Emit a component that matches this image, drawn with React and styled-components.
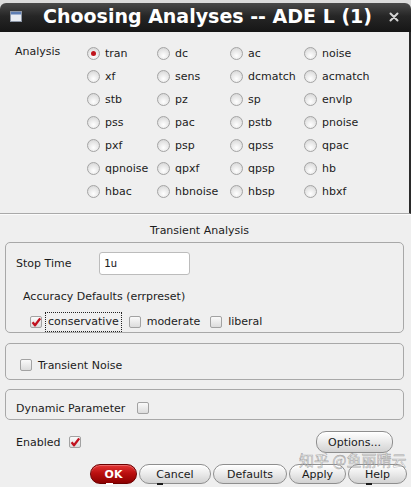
import React from 'react';
import styled, { createGlobalStyle, css } from 'styled-components';

const GlobalStyle = createGlobalStyle`
    body {
        margin: 0;
        background: #dcdcdc;
        font-family: "DejaVu Sans", "Noto Sans", sans-serif;
        font-size: 11px;
        color: #1c1c1c;
    }
`;

const analyses = [
    'tran', 'dc', 'ac', 'noise',
    'xf', 'sens', 'dcmatch', 'acmatch',
    'stb', 'pz', 'sp', 'envlp',
    'pss', 'pac', 'pstb', 'pnoise',
    'pxf', 'psp', 'qpss', 'qpac',
    'qpnoise', 'qpxf', 'qpsp', 'hb',
    'hbac', 'hbnoise', 'hbsp', 'hbxf',
];

const Window = styled.div`
    position: relative;
    width: 411px;
    height: 487px;
    display: flex;
    flex-direction: column;
    overflow: hidden;
`;

const TitleBar = styled.div`
    margin-top: 3px;
    height: 29px;
    display: flex;
    align-items: center;
    padding: 0 12px 2px 10px;
    box-sizing: border-box;
    background: linear-gradient(#4a4a4a, #262626 45%, #161616);
    border-radius: 6px 6px 0 0;
    color: #fff;
`;

const Title = styled.div`
    flex: 1;
    padding-left: 21px;
    font-size: 19px;
    font-weight: bold;
    line-height: 1;
    white-space: nowrap;
`;

const Body = styled.div`
    flex: 1;
    background: #efefef;
    display: flex;
    flex-direction: column;
`;

const AnalysisPanel = styled.div`
    display: flex;
    padding: 10px 0 10px 15px;
    border-right: 2px solid #2a2a2a;
    border-bottom: 1px solid #a9a9a9;
`;

const PanelLabel = styled.div`
    width: 72px;
    line-height: 19px;
`;

const RadioGrid = styled.div`
    display: grid;
    grid-template-columns: 70px 73px 74px 1fr;
    grid-auto-rows: 23px;
`;

const RadioItem = styled.label`
    display: flex;
    align-items: center;
    gap: 5px;
    white-space: nowrap;
`;

const RadioDot = styled.span`
    position: relative;
    width: 13px;
    height: 13px;
    box-sizing: border-box;
    border: 1px solid #a4a4a4;
    border-radius: 50%;
    background: radial-gradient(circle at 50% 70%, #ffffff, #e4e4e4 60%, #cfcfcf);
    flex-shrink: 0;

    ${p => p.checked && css`
        &::after {
            content: '';
            position: absolute;
            left: 3px;
            top: 3px;
            width: 5px;
            height: 5px;
            border-radius: 50%;
            background: #c0141c;
        }
    `}
`;

const LowerPanel = styled.div`
    display: flex;
    flex-direction: column;
    padding: 0 7px 0 5px;
    border-top: 1px solid #fbfbfb;
`;

const SectionTitle = styled.div`
    text-align: center;
    line-height: 18px;
    padding: 7px 10px 0 0;
    margin-bottom: 2px;
`;

const Group = styled.div`
    border: 1px solid #a8a8a8;
    border-radius: 5px;
    margin-top: ${p => p.gap || 0}px;
    padding: ${p => p.pad};
`;

const Row = styled.div`
    display: flex;
    align-items: center;
    height: ${p => p.h || 16}px;
    margin-top: ${p => p.mt || 0}px;
    margin-left: ${p => p.ml || 0}px;
    gap: ${p => p.gap || 0}px;
`;

const FieldLabel = styled.span`
    width: 83px;
`;

const TextInput = styled.input`
    width: 91px;
    height: 23px;
    box-sizing: border-box;
    padding: 0 4px;
    border: 1px solid #bcbcbc;
    border-radius: 3px;
    background: #fff;
    font-family: "DejaVu Sans Mono", "Liberation Mono", monospace;
    font-size: 11px;
    color: #222;
    outline: none;
`;

const Hint = styled.div`
    margin: 14px 0 0 7px;
    line-height: 16px;
`;

const CheckItem = styled.label`
    display: flex;
    align-items: center;
    white-space: nowrap;
`;

const Box = styled.span`
    width: 12px;
    height: 12px;
    box-sizing: border-box;
    border: 1px solid #a2a2a2;
    border-radius: 2px;
    background: linear-gradient(#fafafa, #dcdcdc);
    display: inline-flex;
    flex-shrink: 0;
    margin-left: ${p => p.ml || 0}px;

    svg {
        display: block;
    }
`;

const CheckText = styled.span`
    margin-left: 3px;
    padding: 0 2px;
    line-height: 18px;
    border: 1px dotted ${p => (p.focused ? '#222' : 'transparent')};
`;

const Button = styled.button`
    width: ${p => p.w}px;
    height: ${p => p.h || 20}px;
    padding: 0;
    border: 1px solid #8e8e8e;
    border-radius: 10px;
    background: linear-gradient(#ffffff, #ececec 45%, #d2d2d2);
    box-shadow: inset 0 1px 0 #fff;
    font-family: "DejaVu Sans", sans-serif;
    font-size: 11px;
    color: #1a1a1a;
    flex-shrink: 0;

    ${p => p.primary && css`
        border-color: #6c0000;
        background: linear-gradient(#e43434, #bb1010 45%, #8c0000);
        box-shadow: inset 0 1px 0 rgba(255, 255, 255, 0.25);
        color: #fff;
        font-weight: bold;
    `}
`;

const Key = styled.span`
    position: relative;

    &::after {
        content: '';
        position: absolute;
        left: 1px;
        right: 1px;
        bottom: -4px;
        height: 2px;
        background: currentColor;
    }
`;

const OptionsButton = styled(Button)`
    margin-left: auto;
    margin-right: 11px;
`;

const ButtonBar = styled.div`
    display: flex;
    gap: 2px;
    margin: 11px 0 0 85px;
`;

const Watermark = styled.div`
    position: absolute;
    left: 299px;
    top: 451px;
    font-family: "Noto Sans CJK SC", sans-serif;
    font-size: 15px;
    line-height: 18px;
    white-space: nowrap;
    color: rgba(255, 255, 255, 0.5);
    -webkit-text-stroke: 0.6px rgba(70, 70, 70, 0.45);
    pointer-events: none;
`;

function WindowIcon() {
    return (
        <svg width="12" height="11" viewBox="0 0 12 11">
            <rect x="0.5" y="0.5" width="11" height="10" fill="#e8ecf2" stroke="#8c96a6" />
            <rect x="1" y="1" width="10" height="2.5" fill="#5d7db3" />
        </svg>
    );
}

function CloseIcon() {
    return (
        <svg width="10" height="10" viewBox="0 0 10 10">
            <path d="M1.5 1.5 L8.5 8.5 M8.5 1.5 L1.5 8.5" stroke="#d4d4d4" strokeWidth="2" strokeLinecap="round" />
        </svg>
    );
}

function Check({ checked, ml }) {
    return (
        <Box ml={ml}>
            {checked ? (
                <svg width="10" height="10" viewBox="0 0 10 10">
                    <path d="M1.6 5.2 L4 8.3 L9.2 1.4" fill="none" stroke="#c1121f" strokeWidth="2.3" strokeLinejoin="round" />
                </svg>
            ) : null}
        </Box>
    );
}

function CheckOption({ label, checked, focused }) {
    return (
        <CheckItem>
            <Check checked={checked} />
            <CheckText focused={focused}>{label}</CheckText>
        </CheckItem>
    );
}

function renderRadio(name) {
    return (
        <RadioItem key={name}>
            <RadioDot checked={name === 'tran'} />
            {name}
        </RadioItem>
    );
}

export default function App() {
    return (
        <>
            <GlobalStyle />
            <Window>
                <TitleBar>
                    <WindowIcon />
                    <Title>Choosing Analyses -- ADE L (1)</Title>
                    <CloseIcon />
                </TitleBar>
                <Body>
                    <AnalysisPanel>
                        <PanelLabel>Analysis</PanelLabel>
                        <RadioGrid>{analyses.map(renderRadio)}</RadioGrid>
                    </AnalysisPanel>

                    <LowerPanel>
                        <SectionTitle>Transient Analysis</SectionTitle>

                        <Group pad="9px 10px 0">
                            <Row h={23}>
                                <FieldLabel>Stop Time</FieldLabel>
                                <TextInput defaultValue="1u" />
                            </Row>
                            <Hint>Accuracy Defaults (errpreset)</Hint>
                            <Row h={20} mt={7} ml={14} gap={7}>
                                <CheckOption label="conservative" checked focused />
                                <CheckOption label="moderate" />
                                <CheckOption label="liberal" />
                            </Row>
                        </Group>

                        <Group gap={10} pad="13px 14px 6px">
                            <Row gap={6}>
                                <Check />
                                <span>Transient Noise</span>
                            </Row>
                        </Group>

                        <Group gap={9} pad="10px 10px 3px">
                            <Row>
                                <span>Dynamic Parameter</span>
                                <Check ml={12} />
                            </Row>
                        </Group>

                        <Row h={22} mt={11} ml={11}>
                            <span>Enabled</span>
                            <Check checked ml={9} />
                            <OptionsButton w={77} h={22}>Options...</OptionsButton>
                        </Row>

                        <ButtonBar>
                            <Button primary w={47}><Key>O</Key>K</Button>
                            <Button w={72}><Key>C</Key>ancel</Button>
                            <Button w={74}>Defaults</Button>
                            <Button w={57}>Apply</Button>
                            <Button w={59}><Key>H</Key>elp</Button>
                        </ButtonBar>
                    </LowerPanel>
                </Body>
                <Watermark>知乎 @鱼丽晴云</Watermark>
            </Window>
        </>
    );
}
